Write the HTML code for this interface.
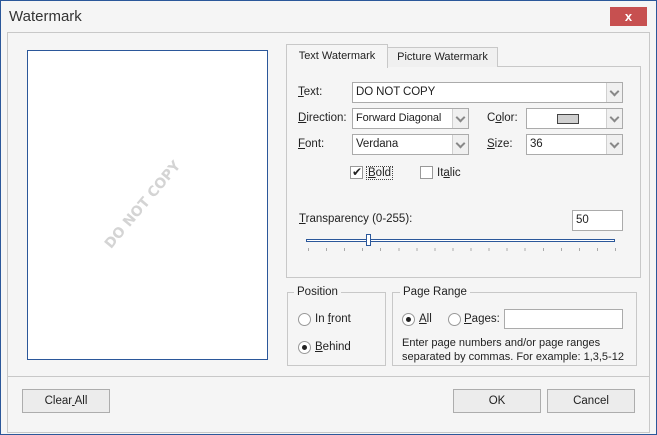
<!DOCTYPE html>
<html><head><style>
*{box-sizing:border-box;margin:0;padding:0}
body{width:657px;height:435px;background:#f5f5f5;font-family:"Liberation Sans",sans-serif;font-size:11.5px;color:#222;position:relative;overflow:hidden}
.a{position:absolute}
.win{left:0;top:0;width:657px;height:435px;border:1px solid #2b579a}
.box{border:1px solid #c8c8c8}
.combo{background:#fff;border:1px solid #ababab;height:21px}
.combo .t{position:absolute;left:3px;top:3px;letter-spacing:-0.1px}
.combo .dd{position:absolute;right:0;top:0;width:16px;height:19px;border-left:1px solid #d0d0d0;background:#f0f0f0}
.combo .dd:after{content:"";position:absolute;left:4px;top:5px;width:5px;height:5px;border-right:2px solid #888;border-bottom:2px solid #888;transform:rotate(45deg)}
.btn{background:#ececec;border:1px solid #adadad;height:24px;text-align:center;line-height:22px}
.radio{width:13px;height:13px;border:1px solid #999;border-radius:50%;background:#fff}
.radio.on:after{content:"";position:absolute;left:3px;top:3px;width:5px;height:5px;border-radius:50%;background:#222}
.chk{width:13px;height:13px;border:1px solid #999;background:#fff}
u{text-decoration:underline}
</style></head><body>
<div class="a win"></div>
<div class="a" style="left:9px;top:8px;font-size:15px;color:#333">Watermark</div>
<div class="a" style="left:610px;top:7px;width:37px;height:19px;background:#c75050;color:#fff;text-align:center;font-size:13px;line-height:19px;font-weight:bold">x</div>
<div class="a box" style="left:7px;top:32px;width:643px;height:401px"></div>
<div class="a" style="left:8px;top:376px;width:641px;height:1px;background:#c8c8c8"></div>
<div class="a" style="left:27px;top:50px;width:241px;height:310px;background:#fff;border:1px solid #2b579a"></div>
<div class="a" style="left:73px;top:197px;width:140px;text-align:center;font-size:14px;font-weight:bold;color:#d4d4d4;transform:rotate(-50deg);font-family:'DejaVu Sans',sans-serif;white-space:nowrap">DO NOT COPY</div>

<div class="a box" style="left:286px;top:66px;width:355px;height:212px"></div>
<div class="a" style="left:286px;top:44px;width:102px;height:24px;border:1px solid #c8c8c8;border-bottom:none;background:#f5f5f5;text-align:center;line-height:22px;font-size:11px">Text Watermark</div>
<div class="a" style="left:387px;top:47px;width:111px;height:20px;border:1px solid #c8c8c8;border-bottom:none;background:#f0f0f0;text-align:center;line-height:19px;font-size:11px">Picture Watermark</div>

<div class="a" style="left:298px;top:86px"><u>T</u>ext:</div>
<div class="a combo" style="left:352px;top:82px;width:271px"><span class="t">DO NOT COPY</span><div class="dd"></div></div>
<div class="a" style="left:298px;top:112px"><u>D</u>irection:</div>
<div class="a combo" style="left:352px;top:108px;width:117px"><span class="t" style="font-size:11px">Forward Diagonal</span><div class="dd"></div></div>
<div class="a" style="left:487px;top:112px">C<u>o</u>lor:</div>
<div class="a combo" style="left:526px;top:108px;width:97px"><div class="a" style="left:30px;top:5px;width:22px;height:10px;border:1px solid #444;background:#d0d0d0"></div><div class="dd"></div></div>
<div class="a" style="left:298px;top:138px"><u>F</u>ont:</div>
<div class="a combo" style="left:352px;top:134px;width:117px"><span class="t">Verdana</span><div class="dd"></div></div>
<div class="a" style="left:487px;top:138px"><u>S</u>ize:</div>
<div class="a combo" style="left:526px;top:134px;width:97px"><span class="t">36</span><div class="dd"></div></div>

<div class="a chk" style="left:350px;top:166px"></div>
<div class="a" style="left:352px;top:165px;font-size:12px">✔</div>
<div class="a" style="left:366px;top:166px;border:1px dotted #444;padding:0 1px"><u>B</u>old</div>
<div class="a chk" style="left:420px;top:166px"></div>
<div class="a" style="left:437px;top:167px">It<u>a</u>lic</div>

<div class="a" style="left:299px;top:213px"><u>T</u>ransparency (0-255):</div>
<div class="a" style="left:572px;top:210px;width:51px;height:21px;background:#fff;border:1px solid #ababab;padding:3px 3px">50</div>
<div class="a" style="left:306px;top:239px;width:309px;height:3px;border:1px solid #2b579a;background:#fff"></div>
<div class="a" style="left:366px;top:234px;width:5px;height:12px;border:1px solid #2b579a;background:#fff"></div>
<div class="a" style="left:308px;top:248px;width:308px;height:3px;background:repeating-linear-gradient(90deg,#aaa 0 1px,transparent 1px 18.06px)"></div>

<div class="a box" style="left:287px;top:292px;width:99px;height:74px"></div>
<div class="a" style="left:294px;top:286px;background:#f5f5f5;padding:0 3px">Position</div>
<div class="a radio" style="left:298px;top:313px"></div>
<div class="a" style="left:315px;top:313px">In <u>f</u>ront</div>
<div class="a radio on" style="left:298px;top:341px"></div>
<div class="a" style="left:315px;top:341px"><u>B</u>ehind</div>

<div class="a box" style="left:392px;top:292px;width:245px;height:74px"></div>
<div class="a" style="left:400px;top:286px;background:#f5f5f5;padding:0 3px">Page Range</div>
<div class="a radio on" style="left:402px;top:313px"></div>
<div class="a" style="left:419px;top:313px"><u>A</u>ll</div>
<div class="a radio" style="left:448px;top:313px"></div>
<div class="a" style="left:464px;top:313px"><u>P</u>ages:</div>
<div class="a" style="left:504px;top:309px;width:119px;height:20px;background:#fff;border:1px solid #ababab"></div>
<div class="a" style="left:402px;top:336px;line-height:14px;font-size:11px">Enter page numbers and/or page ranges<br>separated by commas. For example: 1,3,5-12</div>

<div class="a btn" style="left:22px;top:389px;width:88px">Clear<u> </u>All</div>
<div class="a btn" style="left:453px;top:389px;width:88px">OK</div>
<div class="a btn" style="left:547px;top:389px;width:88px">Cancel</div>
</body></html>
